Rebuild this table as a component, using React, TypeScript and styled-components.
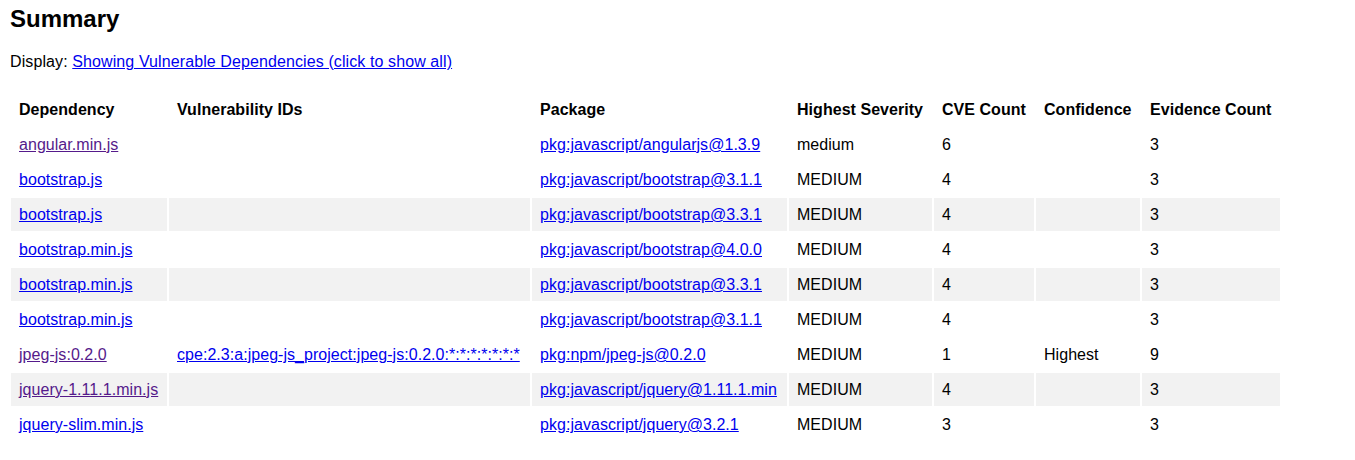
import React from "react";
import styled, { createGlobalStyle } from "styled-components";

const GlobalStyle = createGlobalStyle`
  html, body {
    margin: 0;
    padding: 0;
    background: #ffffff;
  }
  body {
    font-family: "Liberation Sans", Arial, sans-serif;
    font-size: 16px;
    color: #000000;
  }
`;

const Page = styled.div`
  padding: 5px 8px 8px 8px;
`;

const Title = styled.h2`
  margin: 0 0 0 2px;
  font-size: 24px;
  line-height: 28px;
  font-weight: bold;
`;

const DisplayLine = styled.p`
  margin: 19px 0 20px 2px;
  font-size: 16px;
  line-height: 19px;
  letter-spacing: 0.1px;
`;

const Link = styled.a<{ $visited?: boolean }>`
  color: ${(p) => (p.$visited ? "#551a8b" : "#0000ee")};
  text-decoration: underline;
  cursor: pointer;
`;

const Table = styled.table`
  border-collapse: separate;
  border-spacing: 2px;
  margin-left: 1px;
  font-size: 16px;
  letter-spacing: 0.04px;
`;

const HeadCell = styled.th<{ $w: number }>`
  width: ${(p) => p.$w}px;
  text-align: left;
  font-weight: bold;
  padding: 7px 8px;
  line-height: 19px;
  white-space: nowrap;
`;

const Row = styled.tr<{ $striped?: boolean }>`
  background: ${(p) => (p.$striped ? "#f2f2f2" : "transparent")};
`;

const Cell = styled.td`
  text-align: left;
  padding: 7px 8px;
  line-height: 19px;
  white-space: nowrap;
`;

type Dep = {
  name: string;
  nameVisited?: boolean;
  ids?: string;
  pkg: string;
  severity: string;
  cve: string;
  confidence?: string;
  evidence: string;
  striped?: boolean;
};

const deps: Dep[] = [
  { name: "angular.min.js", nameVisited: true, pkg: "pkg:javascript/angularjs@1.3.9", severity: "medium", cve: "6", evidence: "3" },
  { name: "bootstrap.js", pkg: "pkg:javascript/bootstrap@3.1.1", severity: "MEDIUM", cve: "4", evidence: "3" },
  { name: "bootstrap.js", pkg: "pkg:javascript/bootstrap@3.3.1", severity: "MEDIUM", cve: "4", evidence: "3", striped: true },
  { name: "bootstrap.min.js", pkg: "pkg:javascript/bootstrap@4.0.0", severity: "MEDIUM", cve: "4", evidence: "3" },
  { name: "bootstrap.min.js", pkg: "pkg:javascript/bootstrap@3.3.1", severity: "MEDIUM", cve: "4", evidence: "3", striped: true },
  { name: "bootstrap.min.js", pkg: "pkg:javascript/bootstrap@3.1.1", severity: "MEDIUM", cve: "4", evidence: "3" },
  {
    name: "jpeg-js:0.2.0",
    nameVisited: true,
    ids: "cpe:2.3:a:jpeg-js_project:jpeg-js:0.2.0:*:*:*:*:*:*:*",
    pkg: "pkg:npm/jpeg-js@0.2.0",
    severity: "MEDIUM",
    cve: "1",
    confidence: "Highest",
    evidence: "9",
  },
  { name: "jquery-1.11.1.min.js", nameVisited: true, pkg: "pkg:javascript/jquery@1.11.1.min", severity: "MEDIUM", cve: "4", evidence: "3", striped: true },
  { name: "jquery-slim.min.js", pkg: "pkg:javascript/jquery@3.2.1", severity: "MEDIUM", cve: "3", evidence: "3" },
];

const headers: { label: string; w: number }[] = [
  { label: "Dependency", w: 140 },
  { label: "Vulnerability IDs", w: 345 },
  { label: "Package", w: 239 },
  { label: "Highest Severity", w: 127 },
  { label: "CVE Count", w: 84 },
  { label: "Confidence", w: 88 },
  { label: "Evidence Count", w: 122 },
];

export default function App() {
  return (
    <>
      <GlobalStyle />
      <Page>
        <Title>Summary</Title>
        <DisplayLine>
          Display: <Link href="#">Showing Vulnerable Dependencies (click to show all)</Link>
        </DisplayLine>
        <Table>
          <thead>
            <tr>
              {headers.map((h) => (
                <HeadCell key={h.label} $w={h.w}>
                  {h.label}
                </HeadCell>
              ))}
            </tr>
          </thead>
          <tbody>
            {deps.map((d, i) => (
              <Row key={i} $striped={d.striped}>
                <Cell>
                  <Link href="#" $visited={d.nameVisited}>
                    {d.name}
                  </Link>
                </Cell>
                <Cell>{d.ids ? <Link href="#">{d.ids}</Link> : null}</Cell>
                <Cell>
                  <Link href="#">{d.pkg}</Link>
                </Cell>
                <Cell>{d.severity}</Cell>
                <Cell>{d.cve}</Cell>
                <Cell>{d.confidence ?? ""}</Cell>
                <Cell>{d.evidence}</Cell>
              </Row>
            ))}
          </tbody>
        </Table>
      </Page>
    </>
  );
}
